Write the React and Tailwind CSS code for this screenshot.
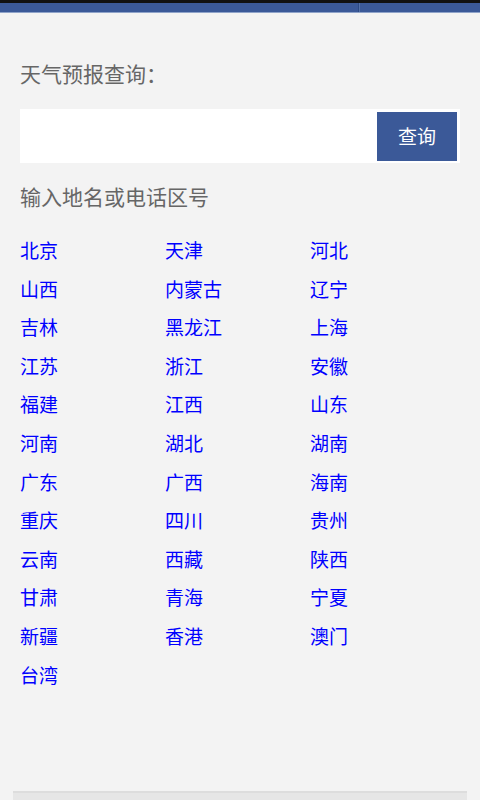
const provinces = [
  '北京', '天津', '河北',
  '山西', '内蒙古', '辽宁',
  '吉林', '黑龙江', '上海',
  '江苏', '浙江', '安徽',
  '福建', '江西', '山东',
  '河南', '湖北', '湖南',
  '广东', '广西', '海南',
  '重庆', '四川', '贵州',
  '云南', '西藏', '陕西',
  '甘肃', '青海', '宁夏',
  '新疆', '香港', '澳门',
  '台湾',
]

const font = { fontFamily: '"Noto Sans CJK SC", "Noto Sans", sans-serif' }

export default function App() {
  return (
    <div className="min-h-[800px] bg-[#f3f3f3] flex flex-col" style={font}>
      {/* top bar */}
      <div className="h-[3px] bg-[#111]" />
      <div className="flex h-[9px] bg-[#3b5998]">
        <div className="w-[359px] border-r border-[#2c4a85]" />
        <div className="flex-1 border-l border-[#5370a8]" />
      </div>
      <div className="h-px bg-[#8fa3c9]" />

      <div className="px-5">
        <h1 className="mt-[45px] text-[21px] leading-[30px] text-[#666]">天气预报查询：</h1>

        <div className="mt-[21px] flex h-[54px] bg-white pt-[3px] pr-[3px] pb-[2px]">
          <input className="flex-1 min-w-0 outline-none bg-transparent px-2 text-[19px]" />
          <button className="w-20 bg-[#3b5998] text-white text-[19px]">查询</button>
        </div>

        <p className="mt-[18px] text-[21px] leading-[30px] text-[#666]">输入地名或电话区号</p>

        <div className="mt-5 grid grid-cols-[145px_145px_145px]">
          {provinces.map((p) => (
            <a key={p} href="#" className="text-[19px] leading-[38.6px] text-[#0000ff]">{p}</a>
          ))}
        </div>
      </div>

      {/* bottom strip */}
      <div className="mt-auto mx-[13px] h-[9px] bg-[#e6e6e6] border-t-2 border-[#dddddd]" />
    </div>
  )
}
